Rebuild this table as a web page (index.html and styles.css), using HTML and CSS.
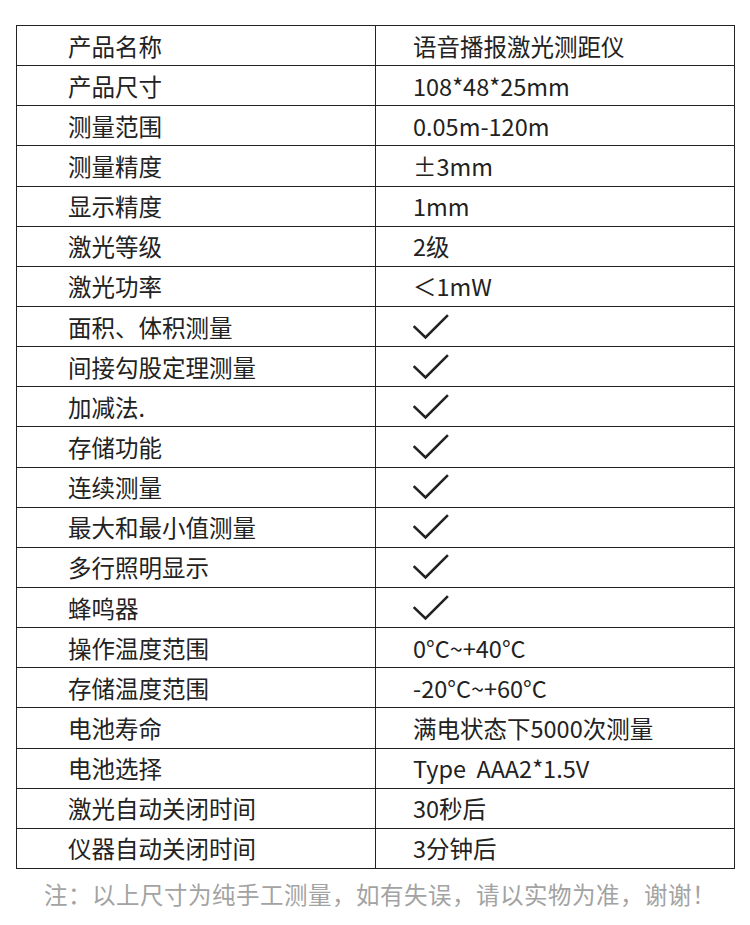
FILE: index.html
```
<!DOCTYPE html>
<html lang="zh">
<head>
<meta charset="utf-8">
<link rel="stylesheet" href="styles.css">
</head>
<body>
<div class="page">
<table class="spec">
<tr><td class="k">产品名称</td><td class="v">语音播报激光测距仪</td></tr>
<tr><td class="k">产品尺寸</td><td class="v">108*48*25mm</td></tr>
<tr><td class="k">测量范围</td><td class="v">0.05m-120m</td></tr>
<tr><td class="k">测量精度</td><td class="v">±3mm</td></tr>
<tr><td class="k">显示精度</td><td class="v">1mm</td></tr>
<tr><td class="k">激光等级</td><td class="v">2级</td></tr>
<tr><td class="k">激光功率</td><td class="v">＜1mW</td></tr>
<tr><td class="k">面积、体积测量</td><td class="v"><svg class="chk" viewBox="0 0 36 26"><path d="M1.5 13 L12.5 23.5 L34 2"/></svg></td></tr>
<tr><td class="k">间接勾股定理测量</td><td class="v"><svg class="chk" viewBox="0 0 36 26"><path d="M1.5 13 L12.5 23.5 L34 2"/></svg></td></tr>
<tr><td class="k">加减法.</td><td class="v"><svg class="chk" viewBox="0 0 36 26"><path d="M1.5 13 L12.5 23.5 L34 2"/></svg></td></tr>
<tr><td class="k">存储功能</td><td class="v"><svg class="chk" viewBox="0 0 36 26"><path d="M1.5 13 L12.5 23.5 L34 2"/></svg></td></tr>
<tr><td class="k">连续测量</td><td class="v"><svg class="chk" viewBox="0 0 36 26"><path d="M1.5 13 L12.5 23.5 L34 2"/></svg></td></tr>
<tr><td class="k">最大和最小值测量</td><td class="v"><svg class="chk" viewBox="0 0 36 26"><path d="M1.5 13 L12.5 23.5 L34 2"/></svg></td></tr>
<tr><td class="k">多行照明显示</td><td class="v"><svg class="chk" viewBox="0 0 36 26"><path d="M1.5 13 L12.5 23.5 L34 2"/></svg></td></tr>
<tr><td class="k">蜂鸣器</td><td class="v"><svg class="chk" viewBox="0 0 36 26"><path d="M1.5 13 L12.5 23.5 L34 2"/></svg></td></tr>
<tr><td class="k">操作温度范围</td><td class="v">0°C~+40°C</td></tr>
<tr><td class="k">存储温度范围</td><td class="v">-20°C~+60°C</td></tr>
<tr><td class="k">电池寿命</td><td class="v">满电状态下5000次测量</td></tr>
<tr><td class="k">电池选择</td><td class="v">Type&nbsp; AAA2*1.5V</td></tr>
<tr><td class="k">激光自动关闭时间</td><td class="v">30秒后</td></tr>
<tr><td class="k">仪器自动关闭时间</td><td class="v">3分钟后</td></tr>
</table>
<p class="note">注：以上尺寸为纯手工测量，如有失误，请以实物为准，谢谢！</p>
</div>
</body>
</html>
```
FILE: styles.css
```
html, body {
  margin: 0;
  padding: 0;
  background: #fff;
}
.page {
  width: 750px;
  padding-top: 25px;
  font-family: "Noto Sans CJK SC", "Noto Sans", sans-serif;
  color: #222;
}
.spec {
  margin-left: 16px;
  width: 719px;
  table-layout: fixed;
  border-collapse: collapse;
  border: 1.5px solid #222;
}
.spec tr {
  height: 40.15px;
}
.spec td {
  border: 1.5px solid #222;
  padding: 0;
  font-size: 23.5px;
  line-height: 24px;
  vertical-align: middle;
}
.spec .k {
  width: 307px;
  padding-left: 51px;
}
.spec .v {
  padding-left: 37px;
}
.chk {
  display: block;
  width: 36px;
  height: 26px;
  fill: none;
  stroke: #222;
  stroke-width: 2.6;
  stroke-linecap: square;
  stroke-linejoin: miter;
}
.note {
  margin: 10px 0 0 0;
  padding-left: 10px;
  text-align: center;
  font-size: 23.5px;
  line-height: 30px;
  color: #a3a3a3;
  letter-spacing: 0.5px;
}
```
